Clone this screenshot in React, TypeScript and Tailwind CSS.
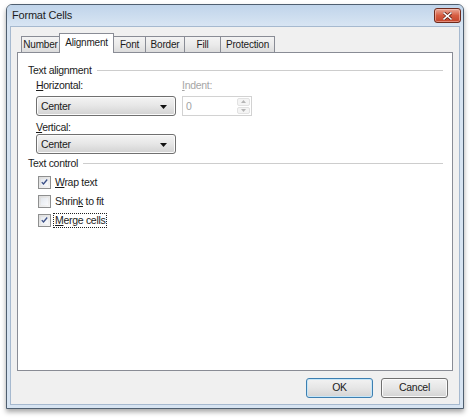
import type { ReactNode } from "react";

const tabs = [
  { label: "Number", w: "w-[39px]" },
  { label: "Alignment", w: "w-[55px]", active: true },
  { label: "Font", w: "w-[33px]" },
  { label: "Border", w: "w-[40px]" },
  { label: "Fill", w: "w-[37px]" },
  { label: "Protection", w: "w-[55px]" },
];

const GroupHeader = ({ title }: { title: string }) => (
  <div className="flex h-[14px] items-center">
    <span className="leading-[14px]">{title}</span>
    <div className="ml-[5px] h-px flex-1 bg-[#cdcdcd]" />
  </div>
);

const Arrow = () => (
  <svg width="7" height="4" viewBox="0 0 7 4" className="absolute right-[8px] top-[8px]">
    <path d="M0 0h7L3.5 4z" fill="#111" />
  </svg>
);

const Combo = ({ value }: { value: string }) => (
  <div className="relative h-[20px] w-[140px] rounded-[3px] border border-[#707070] bg-gradient-to-b from-[#f4f4f4] via-[#e6e6e6] to-[#d2d2d2] pl-[4px] leading-[18px] shadow-[inset_0_0_0_1px_#fbfbfb]">
    {value}
    <Arrow />
  </div>
);

const Spin = () => (
  <div className="flex h-[20px] w-[70px] items-stretch border border-[#d2d2d2] bg-white">
    <span className="flex-1 pl-[3px] leading-[18px] text-[#a3a3a3]">0</span>
    <div className="my-[1px] mr-[1px] flex w-[13px] flex-col gap-px">
      <div className="flex flex-1 items-center justify-center rounded-[2px] border border-[#e2e2e2] bg-[#f4f4f4]">
        <svg width="5" height="3" viewBox="0 0 5 3">
          <path d="M0 3h5L2.5 0z" fill="#b5b5b5" />
        </svg>
      </div>
      <div className="flex flex-1 items-center justify-center rounded-[2px] border border-[#e2e2e2] bg-[#f4f4f4]">
        <svg width="5" height="3" viewBox="0 0 5 3">
          <path d="M0 0h5L2.5 3z" fill="#b5b5b5" />
        </svg>
      </div>
    </div>
  </div>
);

const Checkbox = ({ checked, children, focus }: { checked?: boolean; children: ReactNode; focus?: boolean }) => (
  <div className="flex h-[19px] items-center pl-[10px]">
    <div className="flex h-[13px] w-[13px] items-center justify-center border border-[#8e8f8f] bg-gradient-to-br from-[#dcdcdc] to-[#f6f6f6] p-[2px]">
      <div className="flex h-full w-full items-center justify-center bg-gradient-to-br from-[#e4e8ee] to-[#f8f9fb]">
        {checked && (
          <svg width="9" height="8" viewBox="0 0 9 8" className="-mt-[1px]">
            <path d="M1 4.2l2.2 2.4L8 0.8" stroke="#3b4f86" strokeWidth="1.7" fill="none" />
          </svg>
        )}
      </div>
    </div>
    <span
      className={
        "ml-[2px] px-[1px] leading-[13px] " +
        (focus ? "border border-dotted border-[#222]" : "border border-transparent")
      }
    >
      {children}
    </span>
  </div>
);

const Button = ({ children, primary }: { children: ReactNode; primary?: boolean }) => (
  <div
    className={
      "flex h-[20px] w-[67px] items-center justify-center rounded-[3px] border bg-gradient-to-b from-[#f2f2f2] via-[#e6e6e6] to-[#d3d3d3] " +
      (primary
        ? "border-[#3c7fb1] shadow-[inset_0_0_0_1px_#c6e6f8]"
        : "border-[#707070] shadow-[inset_0_0_0_1px_#fbfbfb]")
    }
  >
    {children}
  </div>
);

export default function App() {
  return (
    <div className="h-[420px] w-[474px] bg-white pl-[6px] pt-[4px] font-['Liberation_Sans',Arial,sans-serif] text-[10.5px] tracking-[-0.3px] text-[#1b1b1b]">
      <div className="flex h-[405px] w-[458px] flex-col rounded-t-[6px] border border-[#4f5f70] bg-[#d7e4f2] shadow-[0_3px_5px_rgba(0,0,0,0.35)]">
        {/* title bar */}
        <div className="flex h-[21px] items-center justify-between rounded-t-[5px] bg-gradient-to-b from-[#c0d4ea] to-[#d8e5f3] pl-[5px] pr-[2px]">
          <span className="text-[11px] tracking-[-0.2px] text-[#1d1d1d]">Format Cells</span>
          <div className="flex h-[15px] w-[27px] items-center justify-center rounded-[3px] border border-[#6e2a1c] bg-gradient-to-b from-[#e8a898] via-[#d65d42] to-[#c2432a] shadow-[inset_0_0_0_1px_rgba(255,210,200,0.5)]">
            <svg width="9" height="8" viewBox="0 0 9 8">
              <path d="M1 1l7 6M8 1L1 7" stroke="#5a1a10" strokeWidth="3" strokeLinecap="square" />
              <path d="M1 1l7 6M8 1L1 7" stroke="#fff" strokeWidth="1.6" strokeLinecap="square" />
            </svg>
          </div>
        </div>

        {/* client area */}
        <div className="mx-[3px] mb-[3px] flex flex-1 flex-col border border-[#a6b9cf] bg-[#f0f0f0] px-[6px] pt-[6px]">
          <div className="relative z-10 -mb-px flex h-[20px] items-end pl-[4px] text-[10px] tracking-[-0.2px]">
            {tabs.map((t, i) =>
              t.active ? (
                <div
                  key={t.label}
                  className={`relative z-10 -ml-px flex h-[20px] items-center justify-center border border-b-0 border-[#898c95] bg-white pb-[2px] ${t.w}`}
                >
                  {t.label}
                </div>
              ) : (
                <div
                  key={t.label}
                  className={`flex h-[17px] items-center justify-center border border-[#898c95] bg-gradient-to-b from-[#f3f3f3] via-[#ebebeb] to-[#dcdcdc] ${i > 0 ? "-ml-px" : ""} ${t.w}`}
                >
                  {t.label}
                </div>
              )
            )}
          </div>

          <div className="flex h-[319px] flex-col border border-[#898c95] bg-white pl-[10px] pr-[9px] pt-[10px]">
            <GroupHeader title="Text alignment" />
            <div className="ml-[8px] mt-[1px] grid grid-cols-[141px_70px] gap-x-[5px]">
              <span className="h-[14px] leading-[14px]">
                <span className="underline">H</span>orizontal:
              </span>
              <span className="h-[14px] leading-[14px] text-[#a6a6a6]">
                <span className="underline">I</span>ndent:
              </span>
              <div className="mt-[4px]">
                <Combo value="Center" />
              </div>
              <div className="mt-[4px]">
                <Spin />
              </div>
              <span className="mt-[4px] h-[14px] leading-[14px]">
                <span className="underline">V</span>ertical:
              </span>
              <span />
              <Combo value="Center" />
            </div>

            <div className="mt-[2px]">
              <GroupHeader title="Text control" />
            </div>
            <div className="mt-[3px] flex flex-col">
              <Checkbox checked>
                <span className="underline">W</span>rap text
              </Checkbox>
              <Checkbox>
                Shrin<span className="underline">k</span> to fit
              </Checkbox>
              <Checkbox checked focus>
                <span className="underline">M</span>erge cells
              </Checkbox>
            </div>
          </div>

          <div className="mt-[7px] flex justify-end gap-[8px] pr-[5px]">
            <Button primary>OK</Button>
            <Button>Cancel</Button>
          </div>
        </div>
      </div>
    </div>
  );
}
